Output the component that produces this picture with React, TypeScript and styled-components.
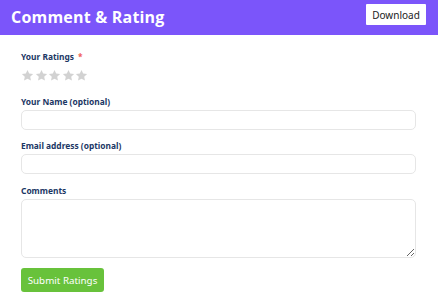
import React from 'react';
import styled, { createGlobalStyle } from 'styled-components';

const GlobalStyle = createGlobalStyle`
  * { box-sizing: border-box; }
  body {
    margin: 0;
    background: #ffffff;
    font-family: "Noto Sans", "Open Sans", sans-serif;
  }
`;

const Header = styled.header`
  height: 35px;
  background: #7b55fa;
  display: flex;
  align-items: center;
  justify-content: space-between;
  padding: 0 12px 0 11px;
`;

const Title = styled.h1`
  margin: -1px 0 0;
  font-family: "Open Sans", sans-serif;
  font-weight: 700;
  font-size: 16px;
  letter-spacing: 0.2px;
  color: #ffffff;
`;

const DownloadButton = styled.button`
  height: 21px;
  width: 60px;
  margin-top: -6px;
  border: none;
  border-radius: 1px;
  background: #ffffff;
  color: #222222;
  font-family: "Noto Sans", sans-serif;
  font-size: 10px;
  padding: 0;
`;

const Form = styled.form`
  display: flex;
  flex-direction: column;
  padding: 16px 22px 0 21px;
`;

const Field = styled.div<{ $gap?: number }>`
  display: flex;
  flex-direction: column;
  margin-bottom: ${({ $gap }) => $gap ?? 10}px;
`;

const Label = styled.label`
  font-family: "Noto Sans", sans-serif;
  font-weight: 700;
  font-size: 8.4px;
  color: #1c3765;
  line-height: 12px;
  margin-bottom: 2px;
`;

const Required = styled.span`
  color: #f0605a;
  margin-left: 4px;
`;

const Stars = styled.div`
  display: flex;
  gap: 0.5px;
  margin-top: 4px;
`;

const Input = styled.input`
  height: 20px;
  width: 100%;
  border: 1px solid #e6e6e6;
  border-radius: 5px;
  background: #ffffff;
`;

const TextArea = styled.textarea`
  display: block;
  height: 59px;
  width: 100%;
  border: 1px solid #e6e6e6;
  border-radius: 5px;
  background: #ffffff;
  resize: vertical;
`;

const SubmitButton = styled.button`
  align-self: flex-start;
  width: 83px;
  height: 24px;
  border: none;
  border-radius: 3px;
  background: #68c23b;
  color: #ffffff;
  font-family: "Noto Sans", sans-serif;
  font-size: 9.8px;
  padding: 0;
`;

const Star = () => (
  <svg width="13" height="13" viewBox="0 0 24 24">
    <path
      d="M12 1.8l3.1 6.6 7.2.9-5.3 5 1.4 7.1L12 17.9l-6.4 3.5 1.4-7.1-5.3-5 7.2-.9z"
      fill="#d2d2d2"
    />
  </svg>
);

export default function App() {
  return (
    <>
      <GlobalStyle />
      <Header>
        <Title>Comment &amp; Rating</Title>
        <DownloadButton type="button">Download</DownloadButton>
      </Header>
      <Form onSubmit={(e) => e.preventDefault()}>
        <Field $gap={14}>
          <Label>
            Your Ratings<Required>*</Required>
          </Label>
          <Stars>
            {[0, 1, 2, 3, 4].map((i) => (
              <Star key={i} />
            ))}
          </Stars>
        </Field>
        <Field>
          <Label>Your Name (optional)</Label>
          <Input type="text" />
        </Field>
        <Field $gap={11}>
          <Label>Email address (optional)</Label>
          <Input type="email" />
        </Field>
        <Field $gap={10}>
          <Label>Comments</Label>
          <TextArea />
        </Field>
        <SubmitButton type="submit">Submit Ratings</SubmitButton>
      </Form>
    </>
  );
}
